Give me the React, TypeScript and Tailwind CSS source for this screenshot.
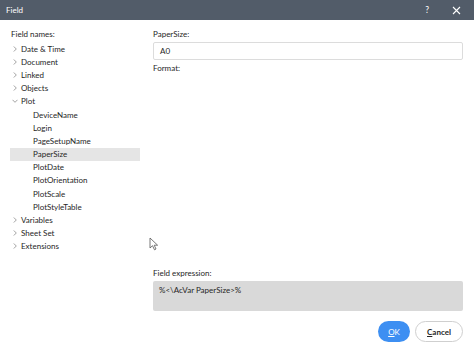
import React from 'react';

const font = { fontFamily: 'Lato, "Open Sans", sans-serif' };

type Node = { label: string; open?: boolean; children?: string[] };

const tree: Node[] = [
  { label: 'Date & Time' },
  { label: 'Document' },
  { label: 'Linked' },
  { label: 'Objects' },
  {
    label: 'Plot',
    open: true,
    children: ['DeviceName', 'Login', 'PageSetupName', 'PaperSize', 'PlotDate', 'PlotOrientation', 'PlotScale', 'PlotStyleTable'],
  },
  { label: 'Variables' },
  { label: 'Sheet Set' },
  { label: 'Extensions' },
];

const Chevron: React.FC<{ open?: boolean }> = ({ open }) => (
  <svg width="6" height="6" viewBox="0 0 6 6" className="text-[#8a8a8a]">
    {open ? (
      <path d="M0.5 1.8 L3 4.3 L5.5 1.8" fill="none" stroke="currentColor" strokeWidth="0.8" />
    ) : (
      <path d="M1.8 0.5 L4.3 3 L1.8 5.5" fill="none" stroke="currentColor" strokeWidth="0.8" />
    )}
  </svg>
);

const App: React.FC = () => {
  return (
    <div className="relative w-[474px] h-[353px] bg-white text-[#262626] overflow-hidden" style={font}>
      <div className="h-[20px] bg-[#525c69] flex items-center px-[6px] text-white text-[8px]">
        <span>Field</span>
        <span className="ml-auto mr-[23px] text-[8.5px]">?</span>
        <svg width="9" height="9" viewBox="0 0 9 9" className="mr-[7px]">
          <path d="M1 1 L8 8 M8 1 L1 8" stroke="white" strokeWidth="1.1" />
        </svg>
      </div>

      <div className="flex pt-[8px]">
        <div className="w-[140px] pl-[10px] text-[8px]">
          <div className="h-[13px] leading-[13px] pl-[1px]">Field names:</div>
          <div className="mt-[1px]">
            {tree.map((n) => (
              <div key={n.label}>
                <div className="h-[13.2px] flex items-center gap-[3px] pl-[2px]">
                  <Chevron open={n.open} />
                  <span>{n.label}</span>
                </div>
                {n.open &&
                  n.children?.map((c) => (
                    <div
                      key={c}
                      className={`h-[13.2px] flex items-center pl-[23px] ${c === 'PaperSize' ? 'bg-[#e5e5e5]' : ''}`}
                    >
                      {c}
                    </div>
                  ))}
              </div>
            ))}
          </div>
        </div>

        <div className="flex-1 pl-[13px] pr-[11px] text-[8px] flex flex-col h-[325px]">
          <div className="h-[13px] leading-[13px]">PaperSize:</div>
          <div className="mt-[1px] h-[18px] border border-[#dcdcdc] rounded-[2px] flex items-center px-[6px]">A0</div>
          <div className="mt-[2px] h-[13px] leading-[13px]">Format:</div>
          <div className="flex-1" />
          <div className="h-[13px] leading-[13px]">Field expression:</div>
          <div className="mt-[1px] h-[30px] bg-[#d9d9d9] rounded-[2px] px-[6px] pt-[3px]">%&lt;\AcVar PaperSize&gt;%</div>
          <div className="flex justify-end gap-[5px] mt-[10px] mb-[11px]">
            <button className="w-[32px] h-[21px] rounded-full bg-[#3d8ff2] text-white text-[8px]">
              <span className="underline">O</span>K
            </button>
            <button className="w-[48px] h-[21px] rounded-full bg-white border border-[#cfcfcf] text-[8px] font-bold text-[#262626]">
              <span className="underline">C</span>ancel
            </button>
          </div>
        </div>
      </div>

      <svg className="absolute left-[149px] top-[237px]" width="10" height="14" viewBox="0 0 10 14">
        <path d="M1 1 L1 11 L3.5 8.7 L5.5 12.8 L7 12 L5.2 8.2 L8.6 8.2 Z" fill="white" stroke="#555" strokeWidth="0.8" strokeLinejoin="round" />
      </svg>
    </div>
  );
};

export default App;
